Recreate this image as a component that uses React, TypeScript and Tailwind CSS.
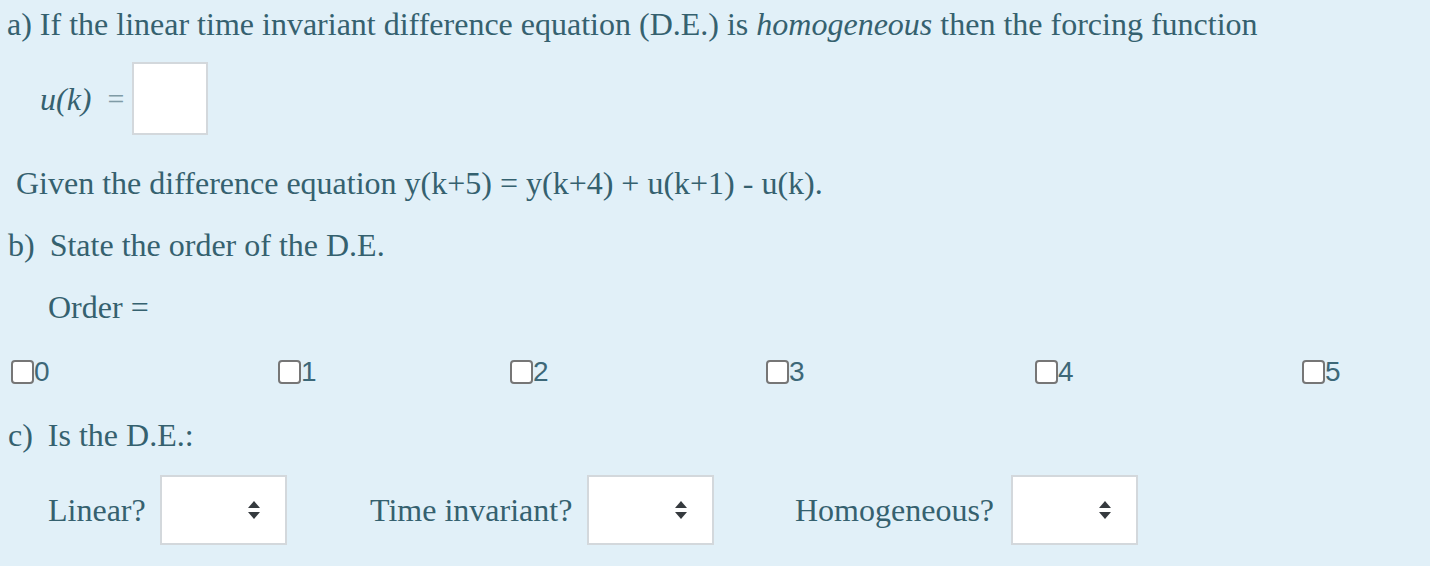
import React from "react";

const serif = { fontFamily: '"Liberation Serif", "Times New Roman", serif' };

function Checkbox({ label }: { label: string }) {
  return (
    <div className="flex items-center">
      <div className="w-[23px] h-[24px] rounded-[4px] border-2 border-[#767676] bg-white" />
      <span
        className="text-[28px] leading-none text-[#3d6878]"
        style={{ fontFamily: '"Liberation Sans", Arial, sans-serif' }}
      >
        {label}
      </span>
    </div>
  );
}

function SelectBox() {
  return (
    <div className="w-[127px] h-[70px] bg-white border-2 border-[#d3d8dc] flex items-center pl-[85px]">
      <svg width="14" height="20" viewBox="0 0 14 20">
        <path d="M7 1 L13 8 L1 8 Z" fill="#353a3e" />
        <path d="M1 12 L13 12 L7 19 Z" fill="#353a3e" />
      </svg>
    </div>
  );
}

export default function App() {
  return (
    <div
      className="w-[1430px] h-[566px] bg-[#e1f0f8] text-[#35616f] overflow-hidden"
      style={serif}
    >
      <div className="h-[48px] flex items-center pl-[7px] text-[32px] whitespace-nowrap">
        <span>
          a) If the linear time invariant difference equation (D.E.) is <i>homogeneous</i> then the forcing function
        </span>
      </div>
      <div className="mt-[14px] h-[73px] flex items-center">
        <span className="ml-[40px] italic text-[32px]">u(k)</span>
        <span className="ml-[16px] text-[30px] text-[#7f9ba6]">=</span>
        <div className="ml-[8px] w-[76px] h-[73px] bg-white border-2 border-[#d3d8dc]" />
      </div>
      <div className="mt-[24px] h-[48px] flex items-center pl-[16px] text-[32px] whitespace-nowrap">
        Given the difference equation y(k+5) = y(k+4) + u(k+1) - u(k).
      </div>
      <div className="mt-[14px] h-[48px] flex items-center pl-[8px] text-[32px] whitespace-nowrap">
        <span>b)</span>
        <span className="ml-[15px]">State the order of the D.E.</span>
      </div>
      <div className="mt-[14px] h-[48px] flex items-center pl-[48px] text-[32px] whitespace-nowrap">
        Order =
      </div>
      <div className="mt-[17px] h-[48px] flex items-center pl-[11px]">
        <div className="w-[267px]"><Checkbox label="0" /></div>
        <div className="w-[232px]"><Checkbox label="1" /></div>
        <div className="w-[256px]"><Checkbox label="2" /></div>
        <div className="w-[269px]"><Checkbox label="3" /></div>
        <div className="w-[267px]"><Checkbox label="4" /></div>
        <div><Checkbox label="5" /></div>
      </div>
      <div className="mt-[15px] h-[48px] flex items-center pl-[8px] text-[32px] whitespace-nowrap">
        <span>c)</span>
        <span className="ml-[15px]">Is the D.E.:</span>
      </div>
      <div className="mt-[16px] h-[70px] flex items-center text-[32px] whitespace-nowrap">
        <span className="ml-[48px] w-[112px]">Linear?</span>
        <SelectBox />
        <span className="ml-[83px] w-[217px]">Time invariant?</span>
        <SelectBox />
        <span className="ml-[81px] w-[216px]">Homogeneous?</span>
        <SelectBox />
      </div>
    </div>
  );
}
